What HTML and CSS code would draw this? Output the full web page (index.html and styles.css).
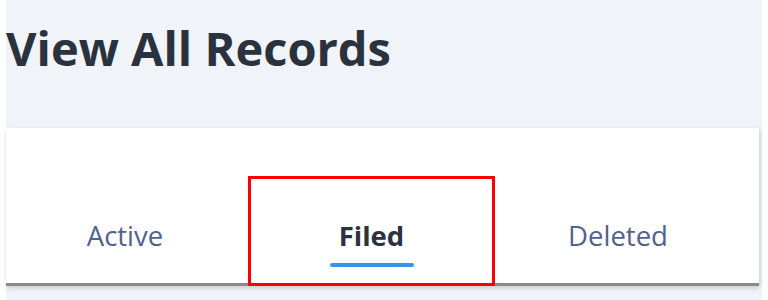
FILE: index.html
```html
<!DOCTYPE html>
<html lang="en">
<head>
<meta charset="utf-8">
<title>View All Records</title>
<link rel="stylesheet" href="styles.css">
</head>
<body>
<div class="page">
  <header class="header">
    <h1 class="title">View All Records</h1>
  </header>
  <section class="card">
    <nav class="tabs">
      <div class="tab tab-first"><span class="tab-label">Active</span><span class="tab-bar"></span></div>
      <div class="tab tab-selected"><span class="tab-label">Filed</span><span class="tab-bar"></span></div>
      <div class="tab tab-last"><span class="tab-label">Deleted</span><span class="tab-bar"></span></div>
    </nav>
  </section>
</div>
</body>
</html>
```
FILE: styles.css
```css
html, body {
  margin: 0;
  padding: 0;
  background: #ffffff;
}
body {
  font-family: "Open Sans", "Noto Sans", sans-serif;
  width: 768px;
  height: 300px;
  overflow: hidden;
}
.page {
  margin-left: 6px;
  width: 756px;
  height: 300px;
  background: #f0f3f7;
}
.header {
  padding: 16px 0 48px 0;
}
.title {
  margin: 0;
  font-size: 47px;
  line-height: 64px;
  font-weight: 700;
  color: #29323d;
}
.card {
  width: 753px;
  height: 158px;
  background: #ffffff;
  box-shadow: 0 3px 5px rgba(0, 0, 0, 0.12), 2px 0 4px rgba(0, 0, 0, 0.06);
  display: flex;
  flex-direction: column;
  justify-content: flex-end;
}
.tabs {
  display: grid;
  grid-template-columns: 242px 247px 1fr;
  border-bottom: 3px solid #8a8a8a;
}
.tab {
  display: flex;
  flex-direction: column;
  align-items: center;
  padding: 38px 0 16px 0;
  border: 3px solid transparent;
  margin-bottom: -3px;
}
.tab-first {
  padding-right: 4px;
}
.tab-last {
  padding-right: 18px;
}
.tab-label {
  font-size: 27.5px;
  line-height: 38px;
  color: #52618f;
}
.tab-bar {
  width: 84px;
  height: 4px;
  margin-top: 8px;
  border-radius: 2px;
  background: transparent;
}
.tab-selected {
  border-color: #ff0000;
}
.tab-selected .tab-label {
  font-weight: 700;
  color: #2b3240;
}
.tab-selected .tab-bar {
  background: #3a92e6;
}
```
